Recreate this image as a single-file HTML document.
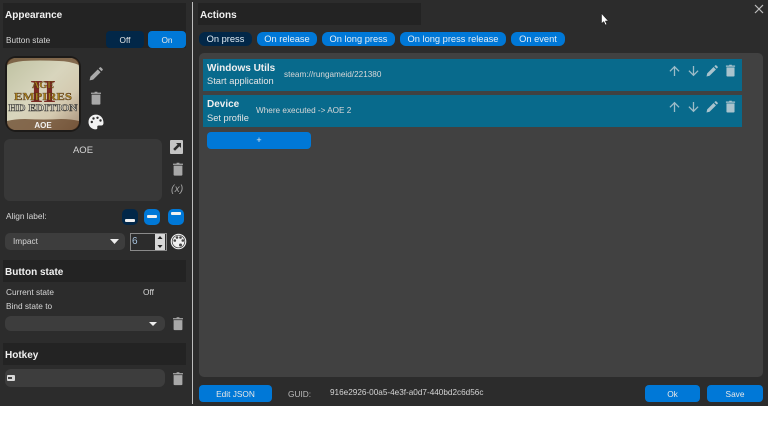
<!DOCTYPE html>
<html><head><meta charset="utf-8">
<style>
html,body{margin:0;padding:0;background:#fff;width:768px;height:426px;overflow:hidden}
#w{position:absolute;left:0;top:0;width:768px;height:406px;background:#2c2c2c;overflow:hidden;font-family:"Liberation Sans",sans-serif;font-size:8.3px;color:#d6d6d6}
#w div,#w svg{position:absolute}
.t{white-space:nowrap;line-height:12px}
.hd{background:#232323}
.h{font-weight:bold;font-size:10px;color:#f0f0f0;white-space:nowrap;line-height:12px}
.b{background:#0078d7;border-radius:4px;color:#e8e8e8;text-align:center;white-space:nowrap}
.tab{top:32px;height:14px;line-height:15px;border-radius:6px;background:#0078d7;color:#e4eef6;text-align:center;font-size:9.3px;white-space:nowrap}
.f{background:#3d3d3d;border-radius:6px}
.item{left:203px;width:539px;height:32px;background:#086a8c}
</style></head><body>
<svg width="0" height="0" style="position:absolute"><defs>
<symbol id="tr" viewBox="0 0 12 14"><path d="M1 1.6h3.6V.7h2.800v.9H11v1.300H1z"/><path d="M1.600 3.600h8.800v9a1 1 0 0 1-1 1H2.600a1 1 0 0 1-1-1z"/></symbol>
<symbol id="pn" viewBox="0 0 14 14"><path d="M.6 13.400l.8-3.600 7.400-7.400 2.800 2.800-7.400 7.400zM9.700 1.500l1-1a1 1 0 0 1 1.400 0l1.400 1.400a1 1 0 0 1 0 1.400l-1 1z"/></symbol>
<symbol id="up" viewBox="0 0 12 12"><path d="M6 11.500V1.500M1 6.300l5-5 5 5" fill="none" stroke-width="1.400" stroke="currentColor"/></symbol>
<symbol id="dn" viewBox="0 0 12 12"><path d="M6 .5v10M1 5.700l5 5 5-5" fill="none" stroke-width="1.400" stroke="currentColor"/></symbol>
<linearGradient id="pg" x1="0" y1="0" x2="1" y2="1"><stop offset="0" stop-color="#bfc2a2"/><stop offset=".45" stop-color="#d8d5bd"/><stop offset=".7" stop-color="#d4cab0"/><stop offset="1" stop-color="#a8907a"/></linearGradient>
</defs></svg>
<div id="w">
<div class="hd" style="left:3px;top:3px;width:183px;height:45px"></div>
<div class="h" style="left:5px;top:10px">Appearance</div>
<div class="t" style="left:6px;top:34px">Button state</div>
<div class="b" style="left:106px;top:31px;width:38px;height:17px;line-height:18px;background:#022748">Off</div>
<div class="b" style="left:148px;top:31px;width:38px;height:17px;line-height:18px">On</div>

<svg style="left:4px;top:55px" width="78" height="78" viewBox="0 0 78 78">
<rect x="1" y="1" width="76" height="76" rx="11" fill="#1c1a18"/>
<rect x="3" y="3" width="72" height="72" rx="9" fill="url(#pg)"/>
<path d="M3 10q0-7 9-7h54q9 0 9 7q-10-4-20-4-20-1-36 0-10 1-16 4zM3 66q8-2 18-2 20 1 36 0 10 0 18 2v1q0 8-9 8H12q-9 0-9-8z" fill="#5f3c20" opacity=".7"/>
<text x="39" y="47" text-anchor="middle" font-family="Liberation Serif,serif" font-weight="bold" font-size="32" fill="#7a2a22" textLength="26" lengthAdjust="spacingAndGlyphs">II</text>
<text x="39" y="33" text-anchor="middle" font-family="Liberation Serif,serif" font-weight="bold" font-size="9.500" fill="#a88320" stroke="#3a1a10" stroke-width=".25" textLength="22" lengthAdjust="spacingAndGlyphs">AGE</text>
<text x="39" y="45" text-anchor="middle" font-family="Liberation Serif,serif" font-weight="bold" font-size="11" fill="#a88320" stroke="#3a1a10" stroke-width=".3" textLength="58" lengthAdjust="spacingAndGlyphs">EMPIRES</text>
<text x="39" y="56" text-anchor="middle" font-family="Liberation Serif,serif" font-weight="bold" font-size="9" fill="#dcd8c8" stroke="#333" stroke-width=".5" textLength="69" lengthAdjust="spacingAndGlyphs">HD EDITION</text>
<text x="39" y="73" text-anchor="middle" font-family="Liberation Sans,sans-serif" font-weight="bold" font-size="8" fill="#f2f2f2">AOE</text>
</svg>

<svg style="left:89px;top:67px;fill:#aaa" width="14" height="14"><use href="#pn"/></svg>
<svg style="left:90px;top:91px;fill:#a8a8a8" width="12" height="14"><use href="#tr"/></svg>
<svg style="left:88px;top:114px" width="16" height="16" viewBox="0 0 16 16"><path fill="#f2f2f2" d="M8 .6C3.700.6.5 3.700.5 8s3.300 7.400 7.200 7.400c1.400 0 1.900-.9 1.600-1.900-.3-1.100.2-2 1.500-2h2.500c1.300 0 2.200-1 2.200-2.500C15.500 3.700 12.300.6 8 .6z"/><circle cx="3.800" cy="8" r="1.200" fill="#2c2c2c"/><circle cx="5.500" cy="4.500" r="1.200" fill="#2c2c2c"/><circle cx="9.500" cy="3.800" r="1.200" fill="#2c2c2c"/><circle cx="12.500" cy="6.500" r="1.200" fill="#2c2c2c"/></svg>

<div class="f" style="left:4px;top:139px;width:158px;height:62px;background:#383838"></div>
<div class="t" style="left:4px;top:143px;width:158px;text-align:center;font-size:9.500px;transform:translateY(2px)">AOE</div>
<div style="left:170px;top:140px;width:13px;height:14px;background:#c4c4c4;border-radius:1px"></div>
<svg style="left:172px;top:142px" width="10" height="10" viewBox="0 0 10 10"><path fill="#2c2c2c" d="M4 1h5v5L7.400 4.400 3 8.800 1.200 7l4.400-4.400z"/></svg>
<svg style="left:172px;top:162px;fill:#a8a8a8" width="12" height="14"><use href="#tr"/></svg>
<div class="t" style="left:171px;top:184px;font-style:italic;font-size:10px;color:#aaa;letter-spacing:.3px">(x)</div>

<div class="t" style="left:6px;top:210px">Align label:</div>
<div class="b" style="left:122px;top:209px;width:16px;height:16px;border-radius:5px;background:#022748"></div>
<div style="left:125px;top:219px;width:10px;height:2.500px;background:#f0f0f0;border-radius:1px"></div>
<div class="b" style="left:144px;top:209px;width:16px;height:16px;border-radius:5px"></div>
<div style="left:147px;top:215px;width:10px;height:2.500px;background:#f0f0f0;border-radius:1px"></div>
<div class="b" style="left:168px;top:209px;width:16px;height:16px;border-radius:5px"></div>
<div style="left:171px;top:212px;width:10px;height:2.500px;background:#f0f0f0;border-radius:1px"></div>

<div class="f" style="left:5px;top:233px;width:120px;height:17px;border-radius:5px"></div>
<div class="t" style="left:13px;top:235px">Impact</div>
<svg style="left:110px;top:239px" width="9" height="5"><path d="M0 0h9L4.500 5z" fill="#eee"/></svg>
<div style="left:130px;top:233px;width:35px;height:16px;border:1px solid #8a8a8a;background:#2c2c2c"></div>
<div class="t" style="left:132px;top:236px;font-size:10px;color:#a8c4e0">6</div>
<div style="left:155px;top:234px;width:10px;height:16px;background:#d8d8d8"></div>
<svg style="left:157px;top:236px" width="6" height="12"><path d="M3 0l2.500 3H.5zM.5 9h5L3 12z" fill="#222"/></svg>
<svg style="left:170px;top:233px" width="17" height="17" viewBox="0 0 17 17"><circle cx="8.500" cy="8.500" r="7.800" fill="#f0f0f0"/><circle cx="8.500" cy="8.500" r="6.300" fill="none" stroke="#333" stroke-width=".7"/><circle cx="4.800" cy="7.500" r="1.300" fill="#444"/><circle cx="7" cy="4.500" r="1.300" fill="#444"/><circle cx="10.500" cy="4.500" r="1.300" fill="#444"/><circle cx="12.800" cy="7.500" r="1.300" fill="#444"/><circle cx="10.500" cy="12" r="1.500" fill="#444"/></svg>

<div class="hd" style="left:3px;top:260px;width:183px;height:22px"></div>
<div class="h" style="left:5px;top:267px">Button state</div>
<div class="t" style="left:6px;top:286px">Current state</div>
<div class="t" style="left:143px;top:286px">Off</div>
<div class="t" style="left:6px;top:300px">Bind state to</div>
<div class="f" style="left:5px;top:316px;width:160px;height:15px"></div>
<svg style="left:149px;top:322px" width="8" height="4"><path d="M0 0h8L4 4z" fill="#eee"/></svg>
<svg style="left:172px;top:316px;fill:#a8a8a8" width="12" height="15"><use href="#tr"/></svg>

<div class="hd" style="left:3px;top:343px;width:183px;height:22px"></div>
<div class="h" style="left:5px;top:350px">Hotkey</div>
<div class="f" style="left:5px;top:369px;width:160px;height:18px"></div>
<div style="left:7px;top:375px;width:8px;height:6px;background:#d8d8d8;border-radius:1px"></div>
<div style="left:8px;top:376.500px;width:4px;height:2px;background:#444"></div>
<svg style="left:172px;top:371px;fill:#a8a8a8" width="12" height="15"><use href="#tr"/></svg>

<div style="left:192px;top:2px;width:1px;height:402px;background:#bdbdbd"></div>

<div class="hd" style="left:198px;top:3px;width:223px;height:22px"></div>
<div class="h" style="left:200px;top:10px">Actions</div>
<div class="tab" style="left:199px;width:53px;background:#022748">On press</div>
<div class="tab" style="left:257px;width:60px">On release</div>
<div class="tab" style="left:322px;width:73px">On long press</div>
<div class="tab" style="left:400px;width:106px">On long press release</div>
<div class="tab" style="left:511px;width:54px">On event</div>

<div style="left:199px;top:53px;width:564px;height:324px;background:#414141;border-radius:5px"></div>
<div class="item" style="top:59px"></div>
<div class="item" style="top:95px"></div>
<div class="t" style="left:207px;top:63px;font-weight:bold;font-size:10px;color:#f0f0f0">Windows Utils</div>
<div class="t" style="left:207px;top:75px;font-size:9.300px;color:#e4e4e4">Start application</div>
<div class="t" style="left:284px;top:69px;font-size:8.200px;color:#d8d8d8">steam://rungameid/221380</div>
<div class="t" style="left:207px;top:99px;font-weight:bold;font-size:10px;color:#f0f0f0">Device</div>
<div class="t" style="left:207px;top:112px;font-size:9.300px;color:#e4e4e4">Set profile</div>
<div class="t" style="left:256px;top:105px;font-size:8.200px;color:#d8d8d8">Where executed -&gt; AOE 2</div>

<svg style="left:669px;top:65px;color:#9dbcc8" width="11" height="12"><use href="#up"/></svg>
<svg style="left:688px;top:65px;color:#9dbcc8" width="11" height="12"><use href="#dn"/></svg>
<svg style="left:706px;top:65px;fill:#a9c3cd" width="12" height="12"><use href="#pn"/></svg>
<svg style="left:725px;top:64px;fill:#a9c3cd" width="11" height="13"><use href="#tr"/></svg>
<svg style="left:669px;top:101px;color:#9dbcc8" width="11" height="12"><use href="#up"/></svg>
<svg style="left:688px;top:101px;color:#9dbcc8" width="11" height="12"><use href="#dn"/></svg>
<svg style="left:706px;top:101px;fill:#a9c3cd" width="12" height="12"><use href="#pn"/></svg>
<svg style="left:725px;top:100px;fill:#a9c3cd" width="11" height="13"><use href="#tr"/></svg>

<div class="b" style="left:207px;top:132px;width:104px;height:17px;line-height:17px;font-size:9px">+</div>

<div class="b" style="left:199px;top:385px;width:73px;height:17px;line-height:18px">Edit JSON</div>
<div class="t" style="left:288px;top:388px;color:#bbb">GUID:</div>
<div class="t" style="left:330px;top:387px;font-size:8.200px;color:#d4d4d4">916e2926-00a5-4e3f-a0d7-440bd2c6d56c</div>
<div class="b" style="left:645px;top:385px;width:55px;height:17px;line-height:18px">Ok</div>
<div class="b" style="left:707px;top:385px;width:56px;height:17px;line-height:18px">Save</div>

<svg style="left:754px;top:4px" width="10" height="10"><path d="M1 1l8 8M9 1l-8 8" stroke="#bdbdbd" stroke-width="1.200"/></svg>
<svg style="left:601px;top:13px" width="8" height="13" viewBox="0 0 8 13"><path d="M.5.500v10l2.300-2 1.500 3.500 1.500-.7-1.500-3.300h3z" fill="#fff" stroke="#111" stroke-width=".5"/></svg>
</div>
</body></html>
